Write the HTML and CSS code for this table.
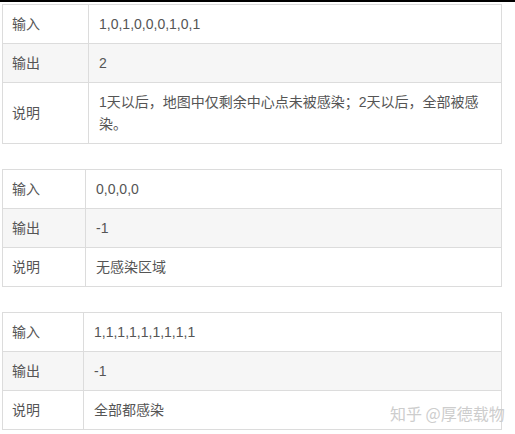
FILE: index.html
```html
<!DOCTYPE html>
<html lang="zh-CN">
<head>
    <meta charset="UTF-8">
    <meta name="viewport" content="width=device-width, initial-scale=1.0">
    <title>示例</title>
    <link rel="stylesheet" href="styles.css">
</head>
<body>
    <div class="top-bar"></div>

    <div class="examples">
        <table class="example-table first">
            <tr>
                <td class="label">输入</td>
                <td>1,0,1,0,0,0,1,0,1</td>
            </tr>
            <tr class="stripe">
                <td class="label">输出</td>
                <td>2</td>
            </tr>
            <tr>
                <td class="label">说明</td>
                <td class="wrap">1天以后，地图中仅剩余中心点未被感染；2天以后，全部被感染。</td>
            </tr>
        </table>

        <table class="example-table second">
            <tr>
                <td class="label">输入</td>
                <td>0,0,0,0</td>
            </tr>
            <tr class="stripe">
                <td class="label">输出</td>
                <td>-1</td>
            </tr>
            <tr>
                <td class="label">说明</td>
                <td>无感染区域</td>
            </tr>
        </table>

        <table class="example-table third">
            <tr>
                <td class="label">输入</td>
                <td>1,1,1,1,1,1,1,1,1</td>
            </tr>
            <tr class="stripe">
                <td class="label">输出</td>
                <td>-1</td>
            </tr>
            <tr>
                <td class="label">说明</td>
                <td>全部都感染</td>
            </tr>
        </table>
    </div>

    <div class="watermark">知乎 @厚德载物</div>
</body>
</html>
```

FILE: styles.css
```css
body {
    margin: 0;
    padding: 0;
    background: #fff;
    font-family: "Liberation Sans", "Noto Sans CJK SC", sans-serif;
    color: #555;
    position: relative;
    height: 434px;
    overflow: hidden;
}
.top-bar {
    height: 2px;
    background: #000;
}
.examples {
    padding: 2px 0 0 2px;
    display: flex;
    flex-direction: column;
    gap: 25px;
}
.example-table {
    width: 500px;
    border-collapse: collapse;
    font-size: 14px;
    line-height: 22px;
}
.example-table td {
    border: 1px solid #dcdcdc;
    padding: 7px 10px;
    height: 24px;
    vertical-align: middle;
}
.example-table .label {
    padding-left: 9px;
}
.example-table .wrap {
    padding: 8px 16px 8px 10px;
}
.first .label {
    width: 66px;
}
.second .label {
    width: 63px;
}
.third .label {
    width: 61px;
}
.stripe td {
    background: #f6f6f6;
}
.watermark {
    position: absolute;
    left: 390px;
    top: 402px;
    font-family: "Noto Sans CJK SC", sans-serif;
    font-size: 16px;
    line-height: 22px;
    color: #cdcdcd;
    white-space: nowrap;
}
```
